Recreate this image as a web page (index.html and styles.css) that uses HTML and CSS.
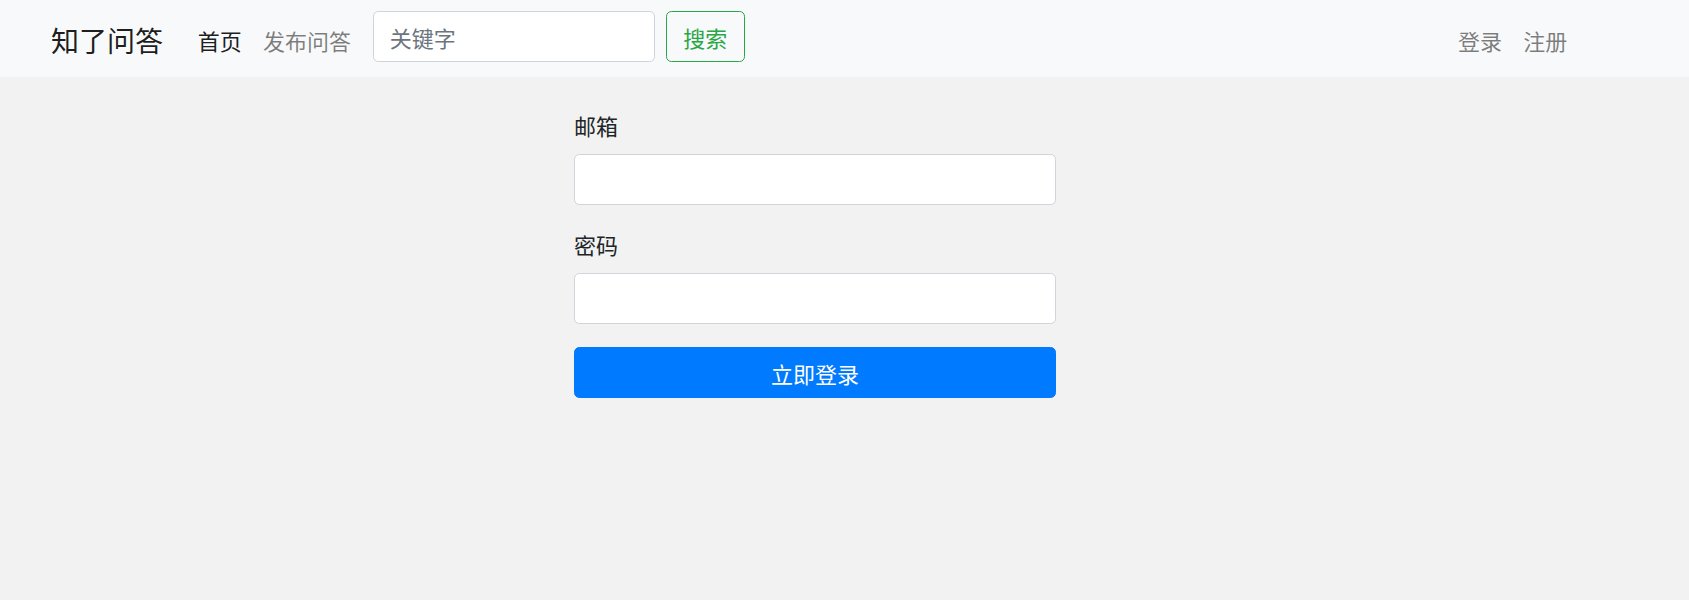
FILE: index.html
```html
<!DOCTYPE html>
<html lang="zh">
<head>
<meta charset="utf-8">
<title>知了问答</title>
<link rel="stylesheet" href="styles.css">
</head>
<body>
<nav class="navbar">
  <a class="brand" href="#">知了问答</a>
  <ul class="nav">
    <li><a class="nav-link active" href="#">首页</a></li>
    <li><a class="nav-link" href="#">发布问答</a></li>
  </ul>
  <form class="search">
    <input class="search-input" type="text" placeholder="关键字">
    <button class="search-btn" type="button">搜索</button>
  </form>
  <ul class="nav nav-right">
    <li><a class="nav-link" href="#">登录</a></li>
    <li><a class="nav-link" href="#">注册</a></li>
  </ul>
</nav>
<main class="page">
  <form class="login">
    <div class="group">
      <label class="label">邮箱</label>
      <input class="field" type="email">
    </div>
    <div class="group">
      <label class="label">密码</label>
      <input class="field" type="password">
    </div>
    <button class="submit" type="button">立即登录</button>
  </form>
</main>
</body>
</html>
```
FILE: styles.css
```css
* { box-sizing: border-box; }
html, body { margin: 0; padding: 0; }
body {
  background: #f2f2f2;
  font-family: "Noto Sans CJK SC", "Noto Sans", "Liberation Sans", sans-serif;
  font-size: 22px;
  color: #212529;
  min-height: 600px;
}
a { text-decoration: none; }
.navbar {
  height: 77px;
  background: #f8f9fa;
  display: flex;
  align-items: center;
  padding: 2px 0 0 51px;
}
.brand {
  font-size: 28px;
  line-height: 40px;
  color: rgba(0,0,0,.9);
  margin-right: 24px;
  white-space: nowrap;
}
.nav {
  list-style: none;
  margin: 0;
  padding: 0;
  display: flex;
}
.nav-link {
  display: block;
  padding: 0 10.67px;
  line-height: 32px;
  color: rgba(0,0,0,.5);
  white-space: nowrap;
}
.nav-link.active { color: rgba(0,0,0,.9); }
.search {
  display: flex;
  align-self: flex-start;
  margin: 9px 0 0 11px;
}
.search-input {
  width: 282px;
  height: 51px;
  border: 1px solid #ced4da;
  border-radius: 5.33px;
  background: #fff;
  padding: 0 16px;
  font: inherit;
  color: #495057;
  outline: none;
}
.search-input::placeholder { color: #6c757d; }
.search-btn {
  margin-left: 11px;
  width: 79px;
  height: 51px;
  border: 1px solid #28a745;
  border-radius: 5.33px;
  background: transparent;
  color: #28a745;
  font: inherit;
  padding: 0;
}
.nav-right { margin-left: auto; margin-right: 111px; }
.page { padding-top: 32px; }
.login {
  width: 482px;
  margin-left: 574px;
}
.group { margin-bottom: 23px; }
.label {
  display: block;
  line-height: 32px;
  margin-bottom: 13px;
  color: #212529;
}
.field {
  display: block;
  width: 100%;
  height: 51px;
  border: 1px solid #ced4da;
  border-radius: 5.33px;
  background: #fff;
  outline: none;
}
.submit {
  display: block;
  width: 100%;
  height: 51px;
  border: 1px solid #007bff;
  border-radius: 5.33px;
  background: #007bff;
  color: #fff;
  font: inherit;
  padding: 0;
}
```
